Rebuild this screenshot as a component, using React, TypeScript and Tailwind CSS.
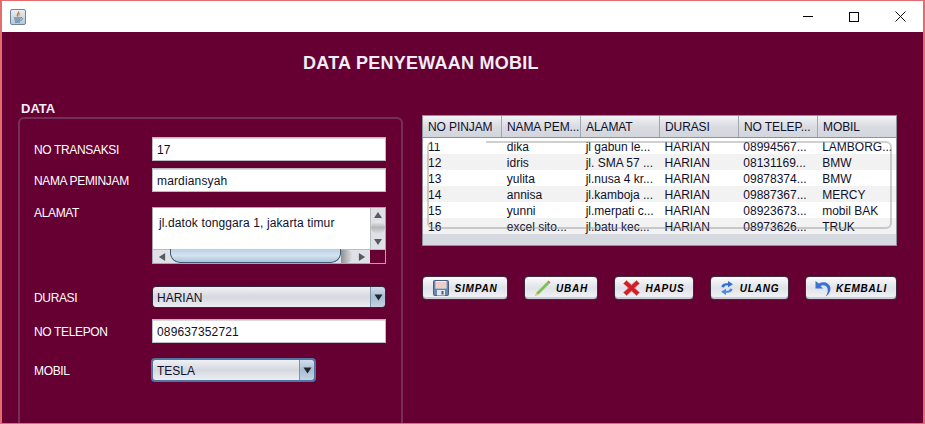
import React from 'react';

const rows = [
  ['11', 'dika', 'jl gabun le...', 'HARIAN', '08994567...', 'LAMBORG...'],
  ['12', 'idris', 'jl. SMA 57 ...', 'HARIAN', '08131169...', 'BMW'],
  ['13', 'yulita', 'jl.nusa 4 kr...', 'HARIAN', '09878374...', 'BMW'],
  ['14', 'annisa', 'jl.kamboja ...', 'HARIAN', '09887367...', 'MERCY'],
  ['15', 'yunni', 'jl.merpati c...', 'HARIAN', '08923673...', 'mobil BAK'],
  ['16', 'excel sito...', 'jl.batu kec...', 'HARIAN', '08973626...', 'TRUK'],
];

const headers = ['NO PINJAM', 'NAMA PEM...', 'ALAMAT', 'DURASI', 'NO TELEP...', 'MOBIL'];

function JavaIcon() {
  return (
    <div className="w-[16px] h-[16px] rounded-[2px] border border-[#6f8496] bg-linear-to-b from-[#e8eef3] to-[#b9c8d4] flex items-center justify-center">
      <svg width="12" height="12" viewBox="0 0 12 12" fill="none">
        <path d="M6.5 0.5C7.5 2 4.5 3 5.5 5.5" stroke="#d9651f" strokeWidth="1.3" />
        <path d="M8 2C7.5 3 6.8 3.5 7 5.5" stroke="#e58a3c" strokeWidth="1" />
        <path d="M2 7H9M2.5 9H8.5M3 11H8" stroke="#456a8c" strokeWidth="1" />
        <path d="M9 6.5C11 6.5 11 9 8.5 9.5" stroke="#456a8c" strokeWidth="0.8" />
      </svg>
    </div>
  );
}

function FloppyIcon() {
  return (
    <svg width="16" height="16" viewBox="0 0 16 16">
      <rect x="0.5" y="0.5" width="15" height="15" rx="1" fill="#6d86ad" stroke="#4a5f80" />
      <rect x="2.5" y="1" width="11" height="7.5" fill="#f4f0ee" />
      <path d="M3 3H13M3 5H13M3 7H13" stroke="#e8a9a0" strokeWidth="1" />
      <rect x="4" y="10" width="8" height="5.5" fill="#e2e6ec" />
      <rect x="8.5" y="11" width="2" height="3.5" fill="#4a5f80" />
    </svg>
  );
}

function PencilIcon() {
  return (
    <svg width="17" height="17" viewBox="0 0 17 17" fill="none">
      <path d="M1 16L2.5 12.5L13.5 1.5L15.5 3.5L4.5 14.5Z" fill="#79c25a" />
      <path d="M2.5 12.5L13.5 1.5" stroke="#a8dc8c" strokeWidth="0.7" />
      <path d="M1 16L2.5 12.5L4.5 14.5Z" fill="#e6c48a" />
      <path d="M13.5 1.5L14.5 0.5L16.5 2.5L15.5 3.5Z" fill="#d8606a" />
    </svg>
  );
}

function CrossIcon() {
  return (
    <svg width="17" height="16" viewBox="0 0 17 16">
      <path d="M3.5 0.5L8.5 5L13.5 0.5L16.5 3.5L11.5 8L16.5 12.5L13.5 15.5L8.5 11L3.5 15.5L0.5 12.5L5.5 8L0.5 3.5Z" fill="#cf2027" stroke="#e0676b" strokeWidth="0.6" />
    </svg>
  );
}

function RefreshIcon() {
  return (
    <svg width="14" height="16" viewBox="0 0 14 16" fill="none">
      <path d="M1.5 7C1.5 4.5 4 3 8 3.2V1L13 4.2L8 7.2V5.2C5.5 5 4.5 5.8 4 7.5Z" fill="#2f6fd8" />
      <path d="M12.5 9C12.5 11.5 10 13 6 12.8V15L1 11.8L6 8.8V10.8C8.5 11 9.5 10.2 10 8.5Z" fill="#4a8be8" />
    </svg>
  );
}

function UndoIcon() {
  return (
    <svg width="16" height="17" viewBox="0 0 16 17" fill="none">
      <path d="M0.5 1V8.5H8L5.5 6C8 4.5 11.5 5.5 12.5 8.5C13.2 11 12.5 14 10.5 16.5C14 14.5 16 11 15.3 7.5C14.3 2.8 8.5 0.8 4 3.5Z" fill="#3a72d6" />
    </svg>
  );
}

function ActionButton({ width, icon, label, gap }: { width: string; icon: React.ReactNode; label: string; gap: string }) {
  return (
    <button className={`${width} ${gap} h-[24px] flex items-center justify-center rounded-[4px] border border-[#3a2a3c] bg-linear-to-b from-[#fbfbfc] via-[#dfe2e8] to-[#f4f5f8] shadow-[inset_0_-2px_0_#c9ccd4]`}>
      {icon}
      <span className="font-['Liberation_Sans',sans-serif] italic font-bold text-[10px] tracking-[0.8px] text-black">{label}</span>
    </button>
  );
}

function TextField({ value }: { value: string }) {
  return (
    <div className="w-[234px] h-[24px] bg-white border border-[#b9bcc2] shadow-[inset_0_1px_0_#d9d9d9] flex items-center pl-[4px] pt-[1px] text-[12px] tracking-[0.15px] text-[#10102a]">
      {value}
    </div>
  );
}

function ComboBox({ value, width, focused }: { value: string; width: string; focused?: boolean }) {
  return (
    <div className={`${width} ${focused ? 'h-[24px] border-2 border-[#4f76a3]' : 'h-[22px] border border-[#33263c]'} rounded-[4px] flex overflow-hidden`}>
      <div className="flex-1 flex items-center pl-[4px] pt-[1px] text-[12px] text-[#10102a] bg-linear-to-b from-[#f0f1f4] via-[#d5d8df] to-[#eceef2]">
        {value}
      </div>
      <div className="w-[15px] flex items-center justify-center bg-linear-to-b from-[#d2dfeb] via-[#a9bdd3] to-[#c3d4e3] border-l border-[#7d93aa]">
        <svg width="9" height="7" viewBox="0 0 9 7"><path d="M0.5 0.5H8.5L4.5 6.5Z" fill="#23262e" /></svg>
      </div>
    </div>
  );
}

function ArrowCell({ dir, className }: { dir: 'up' | 'down' | 'left' | 'right'; className: string }) {
  const d = { up: 'M4.5 1L9 8H0Z', down: 'M0 1H9L4.5 8Z', left: 'M8 0V9L1 4.5Z', right: 'M1 0V9L8 4.5Z' }[dir];
  return (
    <div className={`flex items-center justify-center shrink-0 ${className}`}>
      <svg width="8" height="8" viewBox="0 0 9 9"><path d={d} fill="#555a63" /></svg>
    </div>
  );
}

function AddressArea() {
  return (
    <div className="w-[234px] h-[57px] border border-[#a5a8b0] flex flex-col bg-[#660033]">
      <div className="flex h-[41px]">
        <div className="flex-1 bg-white pl-[6px] pt-[8px] text-[12px] leading-[14px] tracking-[0.12px] text-[#10102a]">jl.datok tonggara 1, jakarta timur</div>
        <div className="w-[15px] flex flex-col bg-[#dfe1e6] border-l border-[#b9bcc2]">
          <ArrowCell dir="up" className="h-[13px]" />
          <div className="h-[13px] rounded-full bg-linear-to-b from-[#f0f0f0] via-[#b5b7bb] to-[#e0e0e0]" />
          <ArrowCell dir="down" className="flex-1" />
        </div>
      </div>
      <div className="flex h-[14px] border-t border-[#b9bcc2]">
        <div className="w-[217px] flex bg-[#dfe1e6]">
          <ArrowCell dir="left" className="w-[17px]" />
          <div className="w-[171px] h-[14px] -mt-px rounded-b-[10px] border-x border-b border-[#3c5872] bg-linear-to-b from-[#b7d0e4] via-[#d5e3ee] to-[#a9c4da]" />
          <div className="w-[12px] rounded-r-full bg-linear-to-r from-[#8f9196] to-[#e5e6e9]" />
          <ArrowCell dir="right" className="flex-1" />
        </div>
      </div>
    </div>
  );
}

function FormRow({ label, children, top }: { label: string; children: React.ReactNode; top?: boolean }) {
  return (
    <div className={`flex ${top ? 'items-start' : 'items-center'}`}>
      <div className={`w-[118px] text-[12px] tracking-[-0.35px] text-white ${top ? 'leading-[13px]' : 'pt-[2px]'}`}>{label}</div>
      {children}
    </div>
  );
}

function DataTable() {
  return (
    <div className="relative w-[475px] h-[131px] border border-[#8f9198] bg-[#d6d9df] flex flex-col">
      <div className="flex h-[21px] box-content border-b border-[#8d93a0]">
        {headers.map((h, i) => (
          <div key={h} className={`${i < 5 ? 'w-[79px] border-r border-[#a3a7b2]' : 'flex-1'} pl-[5px] pt-[1px] flex items-center whitespace-nowrap text-[12px] tracking-[-0.1px] text-[#10102a] bg-linear-to-b from-[#f2f3f5] via-[#dadce2] to-[#d2d5dc]`}>
            {h}
          </div>
        ))}
      </div>
      {rows.map((row, r) => (
        <div key={row[0]} className={`flex h-[16px] ${r % 2 === 0 ? 'bg-white' : 'bg-[#f2f2f2]'}`}>
          {row.map((cell, c) => (
            <div key={c} className="w-[79px] pl-[5px] text-[12px] leading-[18px] text-[#10102a] whitespace-nowrap">{cell}</div>
          ))}
        </div>
      ))}
      {/* repaint glitch left over the rows */}
      <div className="absolute left-[4px] top-[25px] w-[465px] h-[88px] rounded-[6px] border-2 border-[#8a8a8a]/40 pointer-events-none" />
      <div className="absolute left-[9px] top-[24px] w-[54px] h-[3px] bg-white pointer-events-none" />
    </div>
  );
}

export default function App() {
  return (
    <div className="w-[925px] h-[424px] overflow-hidden flex flex-col border-t border-x-2 border-b border-[#e46c6c] font-['Liberation_Sans',Arial,sans-serif]">
      <div className="h-[31px] shrink-0 bg-white flex items-center pl-[8px]">
        <JavaIcon />
        <div className="ml-auto flex items-center">
          <div className="w-[46px] flex justify-center"><div className="w-[10px] h-px bg-black" /></div>
          <div className="w-[46px] flex justify-center"><div className="w-[10px] h-[10px] border border-black" /></div>
          <div className="w-[46px] flex justify-center">
            <svg width="11" height="11" viewBox="0 0 11 11"><path d="M0.5 0.5L10.5 10.5M10.5 0.5L0.5 10.5" stroke="#111" strokeWidth="1" /></svg>
          </div>
        </div>
      </div>

      <div className="flex-1 bg-[#660033] flex flex-col">
        <div className="h-[62px] shrink-0 pl-[301px] flex items-center text-[18px] tracking-[0.25px] font-bold text-[#eeeef5]">DATA PENYEWAAN MOBIL</div>
        <div className="flex pl-[16px]">
          <div className="w-[385px] shrink-0">
            <div className="h-[23px] pl-[3px] pt-[7px] text-[13px] leading-[15px] font-bold text-[#f0f0f5]">DATA</div>
            <div className="h-[320px] rounded-[6px] border-2 border-[#75305a] pl-[14px] pt-[18px] flex flex-col">
              <FormRow label="NO TRANSAKSI"><TextField value="17" /></FormRow>
              <div className="mt-[7px]"><FormRow label="NAMA PEMINJAM"><TextField value="mardiansyah" /></FormRow></div>
              <div className="mt-[15px]"><FormRow label="ALAMAT" top><AddressArea /></FormRow></div>
              <div className="mt-[22px]"><FormRow label="DURASI"><ComboBox value="HARIAN" width="w-[234px]" /></FormRow></div>
              <div className="mt-[11px]"><FormRow label="NO TELEPON"><TextField value="089637352721" /></FormRow></div>
              <div className="mt-[15px]"><FormRow label="MOBIL"><div className="-ml-px"><ComboBox value="TESLA" width="w-[165px]" focused /></div></FormRow></div>
            </div>
          </div>

          <div className="ml-[19px] pt-[21px] flex flex-col">
            <DataTable />
            <div className="mt-[30px] flex gap-[16px]">
              <ActionButton width="w-[86px]" gap="gap-[6px]" icon={<FloppyIcon />} label="SIMPAN" />
              <ActionButton width="w-[74px]" gap="gap-[5px]" icon={<PencilIcon />} label="UBAH" />
              <ActionButton width="w-[80px]" gap="gap-[5px]" icon={<CrossIcon />} label="HAPUS" />
              <ActionButton width="w-[79px]" gap="gap-[6px]" icon={<RefreshIcon />} label="ULANG" />
              <ActionButton width="w-[92px]" gap="gap-[5px]" icon={<UndoIcon />} label="KEMBALI" />
            </div>
          </div>
        </div>
      </div>
    </div>
  );
}
